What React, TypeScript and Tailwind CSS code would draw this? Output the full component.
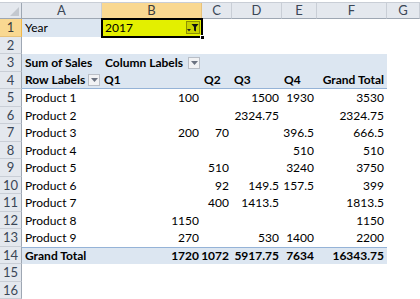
import React from "react";

const GRID = "grid grid-cols-[22px_80px_100px_30px_50px_35px_70px_1fr]";

const DropBtn = () => (
  <div className="w-[12px] h-[12px] border border-[#b9bec6] bg-[#f1f2f4] flex items-center justify-center">
    <svg width="7" height="4" viewBox="0 0 7 4">
      <path d="M0 0h7L3.5 4z" fill="#6b7280" />
    </svg>
  </div>
);

const FilterBtn = () => (
  <div className="w-[14px] h-[13px] border border-[#8d9000] bg-[#c9d400] flex items-center justify-center gap-[1px]">
    <svg width="12" height="9" viewBox="0 0 12 9">
      <path d="M0 6h4L2 8.5z" fill="#222" />
      <path d="M4.5 1h7L9 4v4.5L7 7.5V4z" fill="#111" />
    </svg>
  </div>
);

const data: { n: number; label: string; v: string[] }[] = [
  { n: 5, label: "Product 1", v: ["100", "", "1500", "1930", "3530"] },
  { n: 6, label: "Product 2", v: ["", "", "2324.75", "", "2324.75"] },
  { n: 7, label: "Product 3", v: ["200", "70", "", "396.5", "666.5"] },
  { n: 8, label: "Product 4", v: ["", "", "", "510", "510"] },
  { n: 9, label: "Product 5", v: ["", "510", "", "3240", "3750"] },
  { n: 10, label: "Product 6", v: ["", "92", "149.5", "157.5", "399"] },
  { n: 11, label: "Product 7", v: ["", "400", "1413.5", "", "1813.5"] },
  { n: 12, label: "Product 8", v: ["1150", "", "", "", "1150"] },
  { n: 13, label: "Product 9", v: ["270", "", "530", "1400", "2200"] },
];

function RowHead({ n, sel }: { n: number; sel?: boolean }) {
  return (
    <div
      className={
        "flex items-center justify-center border-r border-b text-[13px] " +
        (sel
          ? "bg-[#f9d891] border-r-[#f0b848] border-b-[#e8c27a] text-[#3b3b3b]"
          : "bg-[#e4e8ee] border-r-[#9ea7b3] border-b-[#c9ced6] text-[#3a4656]")
      }
    >
      {n}
    </div>
  );
}

function rowH(n: number) {
  return n % 2 === 1 ? "h-[18px]" : "h-[17px]";
}

export default function App() {
  return (
    <div
      className="w-[420px] h-[299px] overflow-hidden bg-white text-[12px] text-black leading-none"
      style={{ fontFamily: "Lato, 'Open Sans', sans-serif" }}
    >
      <div className="h-[3px] bg-white border-b border-[#c9ced6]" />
      {/* column headers */}
      <div className={GRID + " h-[16px] text-[13px]"}>
        <div className="relative bg-[#e4e8ee] border-r border-b border-[#9ea7b3]">
          <svg className="absolute right-[2px] bottom-[2px]" width="9" height="9" viewBox="0 0 9 9">
            <path d="M9 0v9H0z" fill="#c3c8cf" />
          </svg>
        </div>
        {["A", "B", "C", "D", "E", "F", "G"].map((c) => (
          <div
            key={c}
            className={
              "flex items-center justify-center border-r border-b " +
              (c === "B"
                ? "bg-[#f9d891] border-r-[#e8c27a] border-b-[#f0b848] text-[#3b3b3b]"
                : "bg-[#e4e8ee] border-r-[#c9ced6] border-b-[#9ea7b3] text-[#3a4656]")
            }
          >
            {c}
          </div>
        ))}
      </div>

      {/* row 1 */}
      <div className={GRID + " " + rowH(1)}>
        <RowHead n={1} sel />
        <div className="bg-[#dce6f1] flex items-center pl-[3px]">Year</div>
        <div className="relative bg-[#e3ef00] flex items-center pl-[3px]">
          2017
          <div className="absolute inset-[-1px_-1px_-1px_-1px] border-2 border-black pointer-events-none" />
          <div className="absolute right-[2px] top-[2px]">
            <FilterBtn />
          </div>
          <div className="absolute right-[-3px] bottom-[-3px] w-[5px] h-[5px] bg-black border border-white" />
        </div>
        <div /><div /><div /><div /><div />
      </div>

      {/* row 2 */}
      <div className={GRID + " " + rowH(2)}>
        <RowHead n={2} />
      </div>

      {/* row 3 */}
      <div className={GRID + " " + rowH(3)}>
        <RowHead n={3} />
        <div className="bg-[#dce6f1] flex items-center pl-[3px] font-bold whitespace-nowrap">Sum of Sales</div>
        <div className="bg-[#dce6f1] flex items-center justify-between pl-[3px] pr-[2px] font-bold whitespace-nowrap">
          <span>Column Labels</span>
          <DropBtn />
        </div>
        <div className="bg-[#dce6f1]" />
        <div className="bg-[#dce6f1]" />
        <div className="bg-[#dce6f1]" />
        <div className="bg-[#dce6f1]" />
        <div />
      </div>

      {/* row 4 */}
      <div className={GRID + " " + rowH(4)}>
        <RowHead n={4} />
        <div className="bg-[#dce6f1] border-b border-[#95b3d7] flex items-center justify-between pl-[3px] pr-[2px] font-bold whitespace-nowrap">
          <span>Row Labels</span>
          <DropBtn />
        </div>
        {["Q1", "Q2", "Q3", "Q4"].map((q) => (
          <div key={q} className="bg-[#dce6f1] border-b border-[#95b3d7] flex items-center pl-[2px] font-bold">
            {q}
          </div>
        ))}
        <div className="bg-[#dce6f1] border-b border-[#95b3d7] flex items-center justify-end pr-[3px] font-bold whitespace-nowrap">
          Grand Total
        </div>
        <div />
      </div>

      {data.map((d) => (
        <div key={d.n} className={GRID + " " + rowH(d.n)}>
          <RowHead n={d.n} />
          <div className="flex items-center pl-[3px] whitespace-nowrap">{d.label}</div>
          {d.v.map((v, i) => (
            <div key={i} className="flex items-center justify-end pr-[3px] whitespace-nowrap">
              {v}
            </div>
          ))}
          <div />
        </div>
      ))}

      {/* row 14 */}
      <div className={GRID + " " + rowH(14)}>
        <RowHead n={14} />
        <div className="bg-[#dce6f1] border-t border-[#95b3d7] flex items-center pl-[3px] font-bold whitespace-nowrap">
          Grand Total
        </div>
        {["1720", "1072", "5917.75", "7634", "16343.75"].map((v, i) => (
          <div key={i} className="bg-[#dce6f1] border-t border-[#95b3d7] flex items-center justify-end pr-[3px] font-bold whitespace-nowrap">
            {v}
          </div>
        ))}
        <div />
      </div>

      <div className={GRID + " " + rowH(15)}>
        <RowHead n={15} />
      </div>
      <div className={GRID + " " + rowH(16)}>
        <RowHead n={16} />
      </div>
    </div>
  );
}
